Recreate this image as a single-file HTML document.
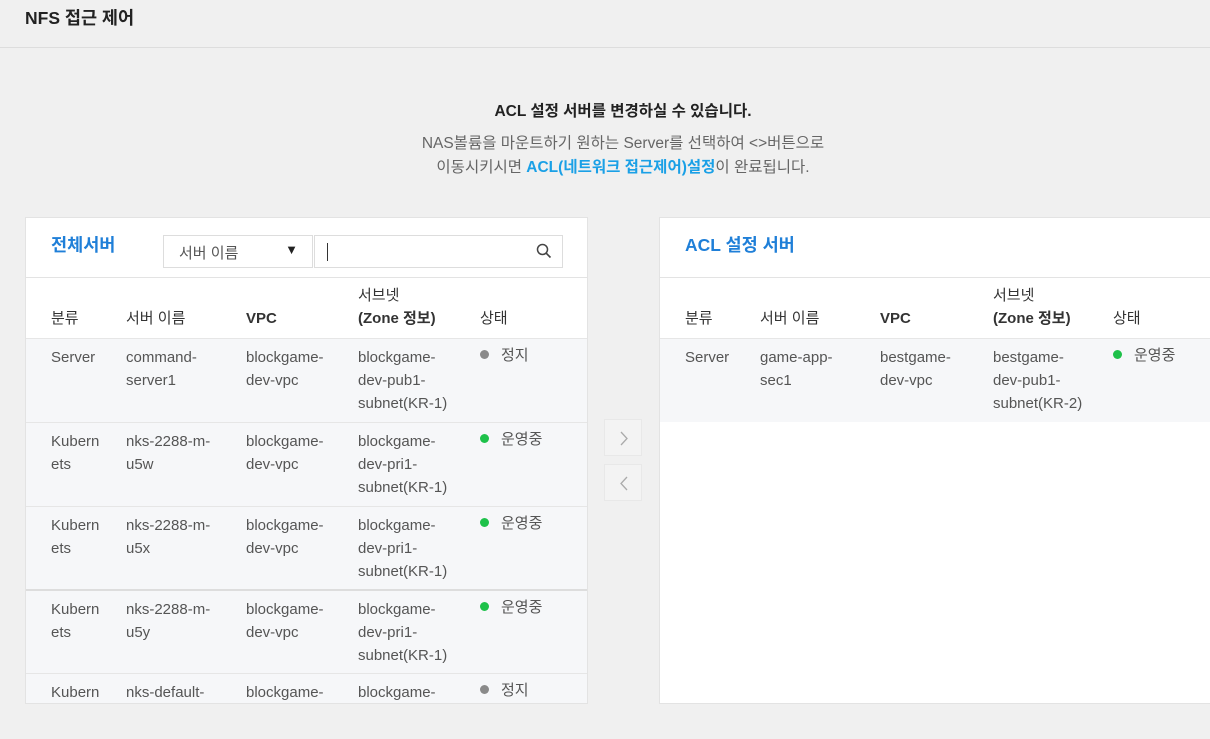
<!DOCTYPE html>
<html><head><meta charset="utf-8"><style>
*{margin:0;padding:0;box-sizing:border-box}
body{width:1210px;height:739px;overflow:hidden;background:#f0f0f0;font-family:"Liberation Sans","Noto Sans CJK KR",sans-serif;color:#333;position:relative}
.hdr{position:absolute;left:0;top:0;width:1210px;height:48px;border-bottom:1px solid #ddd}
.hdr h1{position:absolute;left:25px;top:5px;font-size:17.5px;font-weight:bold;color:#222}
.msg{position:absolute;left:0;width:1246px;text-align:center}
.panel{position:absolute;top:217px;height:487px;background:#fff;border:1px solid #e3e3e3;overflow:hidden}
.ptitle{position:absolute;top:14px;font-size:17.5px;font-weight:bold;color:#1f7fd8}
.sep{position:absolute;left:0;right:0;top:59px;border-top:1px solid #e3e3e3}
.c{position:absolute;font-size:15px;line-height:23px;color:#555}
.h{color:#333;font-size:15px}
.row{position:absolute;left:0;right:0;height:84px;background:#f6f7f9;border-top:1px solid #e6e6e6}
.dot{display:inline-block;width:9px;height:9px;border-radius:50%;margin-right:12px;vertical-align:1px}
.g{background:#1ec14a}.s{background:#8a8a8a}
.btn{position:absolute;left:604px;width:38px;height:37px;background:#f3f3f3;border:1px solid #e8e8e8}
</style></head><body>
<div class="hdr"><h1>NFS 접근 제어</h1></div>
<div class="msg" style="top:99px;font-size:15.5px;font-weight:bold;color:#222">ACL 설정 서버를 변경하실 수 있습니다.</div>
<div class="msg" style="top:132px;font-size:15.5px;color:#666;line-height:24px">NAS볼륨을 마운트하기 원하는 Server를 선택하여 &lt;&gt;버튼으로<br>이동시키시면 <b style="color:#1aa0e6">ACL(네트워크 접근제어)설정</b>이 완료됩니다.</div>

<div class="panel" style="left:25px;width:563px">
<div class="ptitle" style="left:25px">전체서버</div>
<div style="position:absolute;left:137px;top:17px;width:150px;height:33px;border:1px solid #ddd;font-size:15px;color:#555;padding:6px 15px">서버 이름<span style="position:absolute;right:14px;top:6px;font-size:13px;color:#222">▼</span></div>
<div style="position:absolute;left:288px;top:17px;width:249px;height:33px;border:1px solid #ddd">
<div style="position:absolute;left:12px;top:7px;width:1px;height:18px;background:#333"></div>
<svg style="position:absolute;right:10px;top:7px" width="16" height="16" viewBox="0 0 16 16"><circle cx="6.5" cy="6.5" r="5" fill="none" stroke="#444" stroke-width="1.5"/><path d="M10 10l4.5 4.5" stroke="#444" stroke-width="1.6"/></svg></div>
<div class="sep"></div>
<div class="c h" style="left:25px;top:89px">분류</div><div class="c h" style="left:100px;top:89px">서버 이름</div><div class="c h" style="left:220px;top:89px;font-weight:bold">VPC</div><div class="c h" style="left:332px;top:66px">서브넷<br><b>(Zone 정보)</b></div><div class="c h" style="left:454px;top:89px">상태</div>

<div class="row" style="top:120px"><div class="c" style="left:25px;top:7px">Server</div><div class="c" style="left:100px;top:7px">command-<br>server1</div><div class="c" style="left:220px;top:7px">blockgame-<br>dev-vpc</div><div class="c" style="left:332px;top:7px">blockgame-<br>dev-pub1-<br>subnet(KR-1)</div><div class="c" style="left:454px;top:5px"><span class="dot s"></span>정지</div></div>
<div class="row" style="top:204px"><div class="c" style="left:25px;top:7px">Kubern<br>ets</div><div class="c" style="left:100px;top:7px">nks-2288-m-<br>u5w</div><div class="c" style="left:220px;top:7px">blockgame-<br>dev-vpc</div><div class="c" style="left:332px;top:7px">blockgame-<br>dev-pri1-<br>subnet(KR-1)</div><div class="c" style="left:454px;top:5px"><span class="dot g"></span>운영중</div></div>
<div class="row" style="top:288px"><div class="c" style="left:25px;top:7px">Kubern<br>ets</div><div class="c" style="left:100px;top:7px">nks-2288-m-<br>u5x</div><div class="c" style="left:220px;top:7px">blockgame-<br>dev-vpc</div><div class="c" style="left:332px;top:7px">blockgame-<br>dev-pri1-<br>subnet(KR-1)</div><div class="c" style="left:454px;top:5px"><span class="dot g"></span>운영중</div></div>
<div class="row" style="top:371px;border-top:2px solid #ddd"><div class="c" style="left:25px;top:7px">Kubern<br>ets</div><div class="c" style="left:100px;top:7px">nks-2288-m-<br>u5y</div><div class="c" style="left:220px;top:7px">blockgame-<br>dev-vpc</div><div class="c" style="left:332px;top:7px">blockgame-<br>dev-pri1-<br>subnet(KR-1)</div><div class="c" style="left:454px;top:5px"><span class="dot g"></span>운영중</div></div>
<div class="row" style="top:455px"><div class="c" style="left:25px;top:7px">Kubern<br>ets</div><div class="c" style="left:100px;top:7px">nks-default-</div><div class="c" style="left:220px;top:7px">blockgame-</div><div class="c" style="left:332px;top:7px">blockgame-</div><div class="c" style="left:454px;top:5px"><span class="dot s"></span>정지</div></div>
</div>

<div class="btn" style="top:419px"><svg width="38" height="37" viewBox="0 0 38 37"><path d="M16 12l6 6.5-6 6.5" fill="none" stroke="#aaa" stroke-width="1.3"/></svg></div>
<div class="btn" style="top:464px"><svg width="38" height="37" viewBox="0 0 38 37"><path d="M22 12l-6 6.5 6 6.5" fill="none" stroke="#aaa" stroke-width="1.3"/></svg></div>

<div class="panel" style="left:659px;width:560px">
<div class="ptitle" style="left:25px">ACL 설정 서버</div>
<div class="sep"></div>
<div class="c h" style="left:25px;top:89px">분류</div><div class="c h" style="left:100px;top:89px">서버 이름</div><div class="c h" style="left:220px;top:89px;font-weight:bold">VPC</div><div class="c h" style="left:333px;top:66px">서브넷<br><b>(Zone 정보)</b></div><div class="c h" style="left:453px;top:89px">상태</div>
<div class="row" style="top:120px"><div class="c" style="left:25px;top:7px">Server</div><div class="c" style="left:100px;top:7px">game-app-<br>sec1</div><div class="c" style="left:220px;top:7px">bestgame-<br>dev-vpc</div><div class="c" style="left:333px;top:7px">bestgame-<br>dev-pub1-<br>subnet(KR-2)</div><div class="c" style="left:453px;top:5px"><span class="dot g"></span>운영중</div></div>
</div>
</body></html>
